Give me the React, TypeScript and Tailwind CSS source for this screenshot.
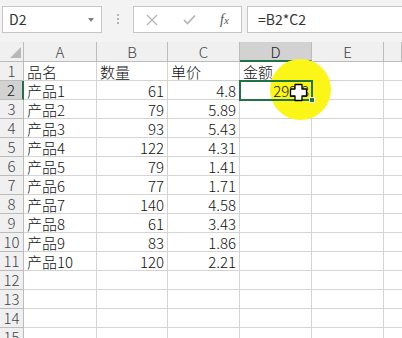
import React from "react";

const rows: [string, string, string, string][] = [
  ["品名", "数量", "单价", "金额"],
  ["产品1", "61", "4.8", "292.8"],
  ["产品2", "79", "5.89", ""],
  ["产品3", "93", "5.43", ""],
  ["产品4", "122", "4.31", ""],
  ["产品5", "79", "1.41", ""],
  ["产品6", "77", "1.71", ""],
  ["产品7", "140", "4.58", ""],
  ["产品8", "61", "3.43", ""],
  ["产品9", "83", "1.86", ""],
  ["产品10", "120", "2.21", ""],
  ["", "", "", ""],
  ["", "", "", ""],
  ["", "", "", ""],
  ["", "", "", ""],
];

const cols = ["A", "B", "C", "D", "E", ""];

const font = { fontFamily: '"Noto Sans CJK SC", "Noto Sans", sans-serif' };

function Toolbar() {
  return (
    <div className="flex h-[42px] items-start bg-[#f3f3f3] pt-[6px] pl-[2px]">
      <div className="relative flex h-[27px] w-[100px] items-center border border-[#c6c6c6] bg-white pl-[6px] text-[14px] text-[#333]">
        D2
        <span className="absolute right-[7px] top-[11px] h-0 w-0 border-x-[3.5px] border-t-[4px] border-x-transparent border-t-[#808080]" />
      </div>
      <div className="flex w-[31px] flex-col items-center gap-[2px] pt-[8px]">
        <span className="h-[2px] w-[2px] rounded-full bg-[#a0a0a0]" />
        <span className="h-[2px] w-[2px] rounded-full bg-[#a0a0a0]" />
        <span className="h-[2px] w-[2px] rounded-full bg-[#a0a0a0]" />
      </div>
      <div className="flex h-[27px] w-[109px] items-center border border-[#c6c6c6] bg-white">
        <svg className="ml-[12px]" width="12" height="12" viewBox="0 0 12 12">
          <path d="M1 1 L11 11 M11 1 L1 11" stroke="#b4b4b4" strokeWidth="1.2" fill="none" />
        </svg>
        <svg className="ml-[25px]" width="13" height="11" viewBox="0 0 13 11">
          <path d="M1 6 L4.5 9.5 L12 1.5" stroke="#b4b4b4" strokeWidth="1.6" fill="none" />
        </svg>
        <span
          className="ml-[24px] text-[14px] italic text-[#555]"
          style={{ fontFamily: '"Liberation Serif", serif' }}
        >
          f<span className="text-[11px]">x</span>
        </span>
      </div>
      <div className="ml-[5px] flex h-[27px] flex-1 items-center border border-r-0 border-[#c6c6c6] bg-white pl-[10px] text-[14px] text-[#333]">
        =B2*C2
      </div>
    </div>
  );
}

function Grid() {
  return (
    <div className="relative">
      <div className="grid grid-cols-[24px_73px_71px_72px_72px_72px_18px] text-[15px] font-light" style={font}>
        <div className="h-[20px] border-r border-b border-[#bcbcbc] bg-[#f0f0f0]">
          <svg className="ml-[10px] mt-[5px]" width="11" height="11" viewBox="0 0 11 11">
            <path d="M11 0 L11 11 L0 11 Z" fill="#b8b8b8" />
          </svg>
        </div>
        {cols.map((c) => (
          <div
            key={c || "f"}
            className={
              c === "D"
                ? "h-[20px] border-r border-b-2 border-r-[#bcbcbc] border-b-[#217346] bg-[#d2d2d2] text-center leading-[19px] text-[#222]"
                : "h-[20px] border-r border-b border-[#bcbcbc] bg-[#f0f0f0] text-center leading-[19px] text-[#444]"
            }
          >
            {c}
          </div>
        ))}
        {rows.map((r, i) => (
          <React.Fragment key={i}>
            <div
              className={
                i === 1
                  ? "h-[19px] border-r-2 border-b border-r-[#217346] border-b-[#bcbcbc] bg-[#d2d2d2] text-center leading-[18px] text-[#222]"
                  : "h-[19px] border-r border-b border-[#bcbcbc] bg-[#f0f0f0] text-center leading-[18px] text-[#444]"
              }
            >
              {i + 1}
            </div>
            {r.map((v, j) => (
              <div
                key={j}
                className={
                  j === 0 || i === 0
                    ? "h-[19px] whitespace-nowrap border-r border-b border-[#d4d4d4] bg-white pl-[3px] leading-[19px] text-[#111]"
                    : "h-[19px] whitespace-nowrap border-r border-b border-[#d4d4d4] bg-white pr-[3px] text-right leading-[19px] text-[#111]"
                }
              >
                {i === 1 && j === 3 ? "" : v}
              </div>
            ))}
            <div className="h-[19px] border-r border-b border-[#d4d4d4] bg-white" />
            <div className="h-[19px] border-b border-[#d4d4d4] bg-white" />
          </React.Fragment>
        ))}
      </div>

      {/* highlight spot */}
      <div className="pointer-events-none absolute left-[270px] top-[17px] h-[61px] w-[61px] rounded-full bg-[#fbf617]" />

      {/* active cell D2 */}
      <div className="absolute left-[239px] top-[38px] h-[21px] w-[74px] border-2 border-[#217346]" />
      <div className="absolute left-[309px] top-[55px] h-[6px] w-[6px] border border-white bg-[#217346]" />
      <div
        className="absolute left-[242px] top-[39px] w-[67px] text-right text-[15px] font-light leading-[19px] text-[#111]"
        style={font}
      >
        292.8
      </div>

      {/* cursor */}
      <svg className="absolute left-[289px] top-[41px]" width="19" height="19" viewBox="0 0 19 19">
        <path
          d="M6 1.5 H13 V6 H17.5 V13 H13 V17.5 H6 V13 H1.5 V6 H6 Z"
          fill="#fff"
          stroke="#000"
          strokeWidth="1.3"
          strokeLinejoin="round"
        />
      </svg>
    </div>
  );
}

export default function App() {
  return (
    <div className="h-[338px] w-[402px] overflow-hidden bg-white" style={font}>
      <Toolbar />
      <Grid />
    </div>
  );
}
